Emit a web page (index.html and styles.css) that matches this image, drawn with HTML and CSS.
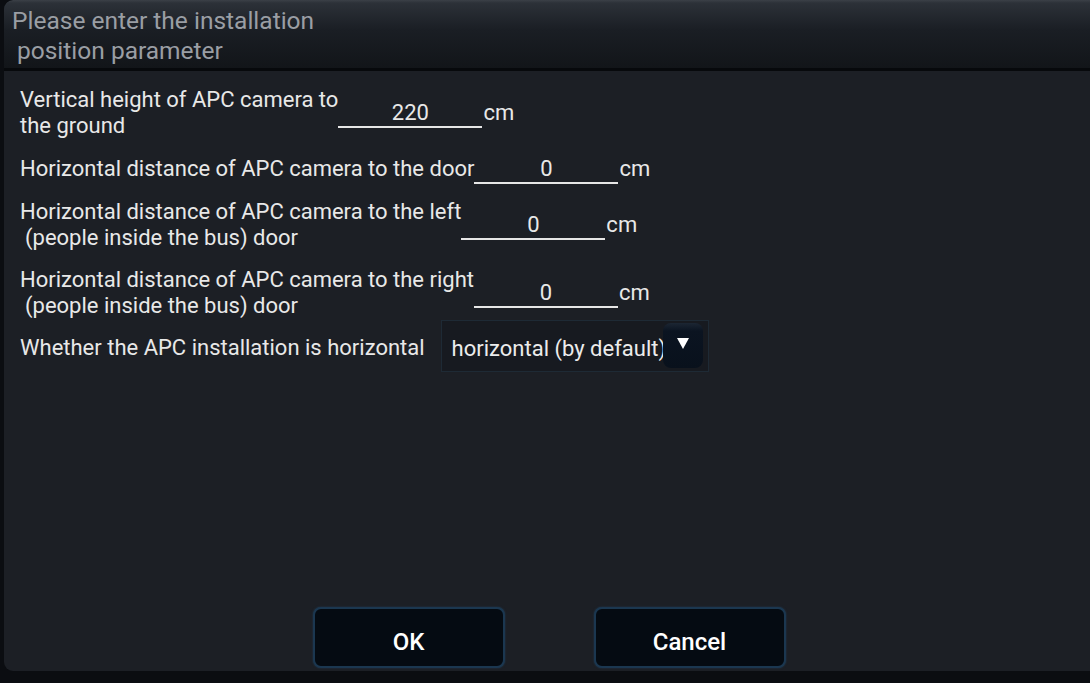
FILE: index.html
```html
<!DOCTYPE html>
<html>
<head>
<meta charset="utf-8">
<link rel="stylesheet" href="styles.css">
</head>
<body>
<div class="dialog">
  <div class="header">
    <div class="title">Please enter the installation<br><span class="indent">position parameter</span></div>
  </div>
  <div class="content">
    <div class="row">
      <div class="label">Vertical height of APC camera to<br>the ground</div>
      <div class="field">220</div>
      <div class="unit">cm</div>
    </div>
    <div class="row">
      <div class="label">Horizontal distance of APC camera to the door</div>
      <div class="field">0</div>
      <div class="unit">cm</div>
    </div>
    <div class="row">
      <div class="label">Horizontal distance of APC camera to the left<br><span class="indent">(people inside the bus) door</span></div>
      <div class="field">0</div>
      <div class="unit">cm</div>
    </div>
    <div class="row row-spaced">
      <div class="label">Horizontal distance of APC camera to the right<br><span class="indent">(people inside the bus) door</span></div>
      <div class="field">0</div>
      <div class="unit">cm</div>
    </div>
    <div class="row row-select">
      <div class="label label-select">Whether the APC installation is horizontal</div>
      <div class="select">
        <span class="select-text">horizontal (by default)</span>
        <span class="select-btn">
          <svg width="14" height="14" viewBox="0 0 14 14"><path d="M1 2 L13 2 L7 13 Z" fill="#ffffff"/></svg>
        </span>
      </div>
    </div>
  </div>
  <div class="footer">
    <button class="btn">OK</button>
    <button class="btn">Cancel</button>
  </div>
</div>
</body>
</html>
```

FILE: styles.css
```css
html, body {
  margin: 0;
  padding: 0;
  background: #0b0d11;
  width: 1090px;
  height: 683px;
  overflow: hidden;
  font-family: Roboto, "Liberation Sans", sans-serif;
}

.dialog {
  margin-left: 4px;
  width: 1086px;
  height: 671px;
  background: #1c1f25;
  border-radius: 9px 0 0 9px;
  display: flex;
  flex-direction: column;
  overflow: hidden;
}

.header {
  height: 68px;
  flex: none;
  background: linear-gradient(to bottom, #3b4047 0px, #2c3138 3px, #1a1e24 30px, #121519 68px);
  border-bottom: 3px solid #07090c;
  border-radius: 9px 0 0 0;
  box-sizing: content-box;
}

.title {
  color: #9a9ea4;
  font-size: 24.5px;
  line-height: 30px;
  padding: 6px 0 0 8px;
}

.indent {
  padding-left: 5px;
}

.content {
  flex: 1;
  padding: 16px 0 0 16px;
  display: flex;
  flex-direction: column;
  gap: 15px;
}

.row {
  display: flex;
  align-items: center;
}

.row-spaced {
  margin-top: 1px;
}

.label {
  color: #e8e8e8;
  font-size: 22px;
  line-height: 26px;
  white-space: nowrap;
}

.label-select {
  padding-top: 4px;
}

.field {
  width: 144px;
  height: 26px;
  border-bottom: 2px solid #e6e6e6;
  color: #e8e8e8;
  font-size: 22px;
  line-height: 26px;
  text-align: center;
  margin-top: 2px;
}

.unit {
  color: #e8e8e8;
  font-size: 22px;
  line-height: 26px;
  padding-left: 1px;
}

.row-select {
  margin-top: -14px;
}

.select {
  margin-left: 16px;
  width: 256px;
  height: 50px;
  border: 1px solid #1e2a35;
  background: #171a20;
  display: flex;
  align-items: center;
  padding-left: 10px;
  box-sizing: content-box;
}

.select-text {
  width: 211px;
  overflow: hidden;
  white-space: nowrap;
  color: #ececec;
  font-size: 22px;
  line-height: 26px;
  margin-top: 5px;
}

.select-btn {
  width: 40px;
  height: 45px;
  border-radius: 8px;
  background: linear-gradient(to bottom, #1c2633 0px, #0b1421 8px, #09111c 100%);
  display: flex;
  justify-content: center;
  align-items: flex-start;
  padding-top: 13px;
  box-sizing: border-box;
  margin-top: -2px;
}

.footer {
  flex: none;
  height: 64px;
  display: flex;
  justify-content: center;
  gap: 89px;
  padding-left: 4px;
  align-items: flex-start;
}

.btn {
  width: 192px;
  height: 61px;
  background: #050b12;
  border: 2px solid #1b3750;
  border-radius: 8px;
  box-shadow: 0 0 2px rgba(40, 90, 130, 0.5);
  color: #ffffff;
  font-family: Roboto, "Liberation Sans", sans-serif;
  font-size: 24px;
  font-weight: 500;
  padding-top: 9px;
}
```
